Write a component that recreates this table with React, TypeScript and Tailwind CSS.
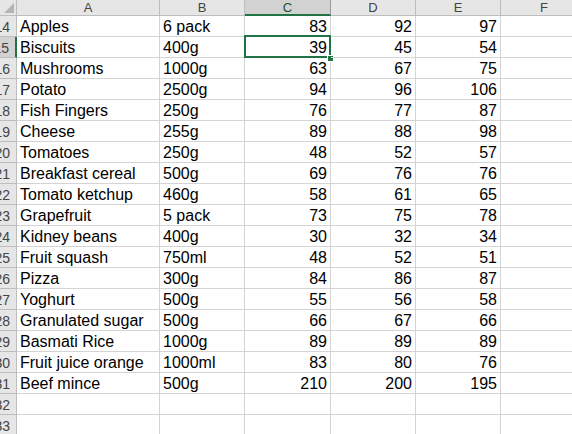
import React from "react";

const rows: [string, string, string, string, string][] = [
  ["Apples", "6 pack", "83", "92", "97"],
  ["Biscuits", "400g", "39", "45", "54"],
  ["Mushrooms", "1000g", "63", "67", "75"],
  ["Potato", "2500g", "94", "96", "106"],
  ["Fish Fingers", "250g", "76", "77", "87"],
  ["Cheese", "255g", "89", "88", "98"],
  ["Tomatoes", "250g", "48", "52", "57"],
  ["Breakfast cereal", "500g", "69", "76", "76"],
  ["Tomato ketchup", "460g", "58", "61", "65"],
  ["Grapefruit", "5 pack", "73", "75", "78"],
  ["Kidney beans", "400g", "30", "32", "34"],
  ["Fruit squash", "750ml", "48", "52", "51"],
  ["Pizza", "300g", "84", "86", "87"],
  ["Yoghurt", "500g", "55", "56", "58"],
  ["Granulated sugar", "500g", "66", "67", "66"],
  ["Basmati Rice", "1000g", "89", "89", "89"],
  ["Fruit juice orange", "1000ml", "83", "80", "76"],
  ["Beef mince", "500g", "210", "200", "195"],
  ["", "", "", "", ""],
  ["", "", "", "", ""],
];

const widths = ["w-[143px]", "w-[85px]", "w-[86px]", "w-[85px]", "w-[85px]"];
const letters = ["A", "B", "C", "D", "E"];

export default function App() {
  return (
    <div
      className="w-[572px] h-[434px] overflow-hidden bg-white text-black"
      style={{ fontFamily: '"Liberation Sans", Arial, sans-serif' }}
    >
      {/* Header row */}
      <div className="flex h-[16px]">
        <div className="relative w-[17px] shrink-0 h-[16px] bg-[#e6e6e6] border-r border-b border-[#bdbdbd]">
          <svg className="absolute right-[2px] bottom-[2px]" width="10" height="10" viewBox="0 0 10 10">
            <polygon points="10,0 10,10 0,10" fill="#b4b4b4" />
          </svg>
        </div>
        {letters.map((l, i) => (
          <div
            key={l}
            className={`${widths[i]} shrink-0 h-[16px] flex items-center justify-center text-[13px] leading-none border-r ${
              l === "C"
                ? "bg-[#d2d2d2] border-b-2 border-b-[#217346] border-r-[#9b9b9b] text-[#1f4f33]"
                : "bg-[#e6e6e6] border-b border-b-[#bdbdbd] border-r-[#bdbdbd] text-[#444]"
            }`}
          >
            {l}
          </div>
        ))}
        <div className="flex-1 h-[16px] flex items-center justify-start text-[13px] leading-none bg-[#e6e6e6] border-b border-[#bdbdbd] text-[#444]">
          <span className="w-[86px] text-center">F</span>
        </div>
      </div>

      {rows.map((r, ri) => {
        const num = 14 + ri;
        const sel = num === 15;
        return (
          <div key={ri} className={`flex h-[21px] ${sel ? "relative z-10" : ""}`}>
            <div
              className={`w-[17px] shrink-0 h-[21px] flex items-center justify-end overflow-hidden whitespace-nowrap text-[14px] leading-none text-[#444] pr-[6px] pt-[1px] border-b border-b-[#bdbdbd] ${
                sel ? "bg-[#d2d2d2] border-r-2 border-r-[#217346]" : "bg-[#e6e6e6] border-r border-r-[#bdbdbd]"
              }`}
            >
              {num}
            </div>
            {r.map((v, ci) => {
              const right = ci >= 2;
              const isSel = sel && ci === 2;
              return (
                <div
                  key={ci}
                  className={`relative ${widths[ci]} shrink-0 h-[21px] flex items-center whitespace-nowrap text-[16px] leading-none pt-[1px] border-r border-b border-[#d4d4d4] ${
                    right ? "justify-end pr-[3px]" : "justify-start pl-[3px]"
                  }`}
                >
                  {v}
                  {isSel && (
                    <>
                      <div className="absolute left-[-1px] top-[-2px] right-[-1px] bottom-[-1px] border-2 border-[#217346]" />
                      <div className="absolute right-[-4px] bottom-[-5px] w-[7px] h-[7px] bg-[#217346] border border-white" />
                    </>
                  )}
                </div>
              );
            })}
            <div className="flex-1 h-[21px] border-b border-[#d4d4d4]" />
          </div>
        );
      })}
    </div>
  );
}
